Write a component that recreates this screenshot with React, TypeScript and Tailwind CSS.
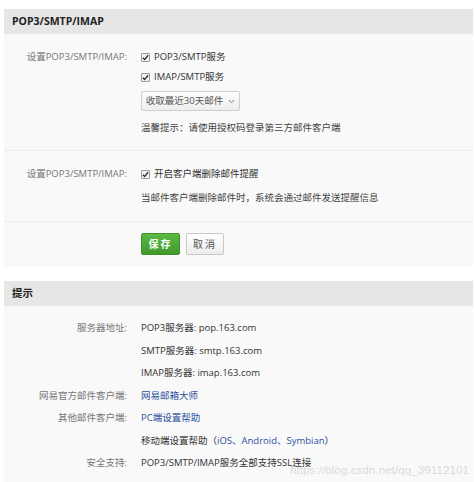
import React from "react";

const font = { fontFamily: '"Open Sans","Noto Sans CJK SC",sans-serif' };

function Check() {
  return (
    <span className="mr-[4px] inline-flex h-[9px] w-[9px] shrink-0 items-center justify-center rounded-[1px] border border-[#9a9a9a] bg-[#f2f2f2]">
      <svg width="7" height="7" viewBox="0 0 8 8">
        <path d="M1 4.2 L3 6.2 L7 1.5" stroke="#333" strokeWidth="1.6" fill="none" />
      </svg>
    </span>
  );
}

function Row({ label, children, h = "h-[20px]" }: { label?: string; children: React.ReactNode; h?: string }) {
  return (
    <div className={`flex items-center whitespace-nowrap ${h}`}>
      <div className="w-[123px] shrink-0 text-right text-[#777]">{label}</div>
      <div className="ml-[14px] flex items-center text-[#333]">{children}</div>
    </div>
  );
}

export default function App() {
  return (
    <div className="relative h-[482px] w-[474px] overflow-hidden bg-white text-[9.5px]" style={font}>
      <div className="ml-[4px] mr-[1px] mt-[9px]">
        <div className="flex h-[25px] items-center bg-[#e6e6e6] pl-[8px] text-[10.5px] font-bold text-[#222]">POP3/SMTP/IMAP</div>
        <div className="bg-[#f9f9f9]">
          <div className="border-b border-[#ececec] pb-[12px] pt-[13px]">
            <Row label="设置POP3/SMTP/IMAP:">
              <Check />
              POP3/SMTP服务
            </Row>
            <Row label="">
              <Check />
              IMAP/SMTP服务
            </Row>
            <div className="ml-[137px] mt-[4px] flex h-[20px] w-[99px] items-center justify-center gap-[5px] whitespace-nowrap rounded-[2px] border border-[#cfcfcf] bg-gradient-to-b from-[#fdfdfd] to-[#eeeeee] text-[#555]">
              收取最近30天邮件
              <svg width="7" height="5" viewBox="0 0 7 5">
                <path d="M0.8 1 L3.5 3.8 L6.2 1" stroke="#777" strokeWidth="1" fill="none" />
              </svg>
            </div>
            <div className="ml-[137px] mt-[7px] flex h-[20px] items-center whitespace-nowrap text-[#444]">温馨提示：请使用授权码登录第三方邮件客户端</div>
          </div>
          <div className="border-b border-[#ececec] pb-[13px] pt-[13px]">
            <Row label="设置POP3/SMTP/IMAP:">
              <Check />
              开启客户端删除邮件提醒
            </Row>
            <div className="ml-[137px] mt-[4px] flex h-[20px] items-center whitespace-nowrap text-[#444]">当邮件客户端删除邮件时，系统会通过邮件发送提醒信息</div>
          </div>
          <div className="flex gap-[6px] pb-[12px] pl-[137px] pt-[11px]">
            <button className="flex h-[22px] w-[39px] items-center justify-center rounded-[2px] border border-[#3f8f2a] bg-gradient-to-b from-[#5cb945] to-[#3f9a2c] text-[10px] font-bold tracking-[2px] text-white">
              保存
            </button>
            <button className="flex h-[22px] w-[38px] items-center justify-center rounded-[2px] border border-[#c8c8c8] bg-gradient-to-b from-[#ffffff] to-[#ececec] text-[10px] tracking-[2px] text-[#555]">
              取消
            </button>
          </div>
        </div>

        <div className="mt-[14px] flex h-[25px] items-center bg-[#e6e6e6] pl-[8px] text-[10.5px] font-bold text-[#222]">提示</div>
        <div className="h-[200px] bg-[#f9f9f9] pt-[11px]">
          <Row label="服务器地址:" h="h-[22.5px]">POP3服务器: pop.163.com</Row>
          <Row label="" h="h-[22.5px]">SMTP服务器: smtp.163.com</Row>
          <Row label="" h="h-[22.5px]">IMAP服务器: imap.163.com</Row>
          <Row label="网易官方邮件客户端:" h="h-[22.5px]">
            <span className="text-[#2a4fa0]">网易邮箱大师</span>
          </Row>
          <Row label="其他邮件客户端:" h="h-[22.5px]">
            <span className="text-[#2a4fa0]">PC端设置帮助</span>
          </Row>
          <Row label="" h="h-[22.5px]">
            <span>移动端设置帮助（</span>
            <span className="text-[#2a4fa0]">iOS、Android、Symbian</span>
            <span>）</span>
          </Row>
          <Row label="安全支持:" h="h-[22.5px]">POP3/SMTP/IMAP服务全部支持SSL连接</Row>
        </div>
      </div>
      <div className="absolute left-[290px] top-[462px] whitespace-nowrap text-[11.5px] tracking-[0.1px] text-[#dadada]" style={{ fontFamily: '"Liberation Sans",sans-serif' }}>
        https://blog.csdn.net/qq_39112101
      </div>
    </div>
  );
}
